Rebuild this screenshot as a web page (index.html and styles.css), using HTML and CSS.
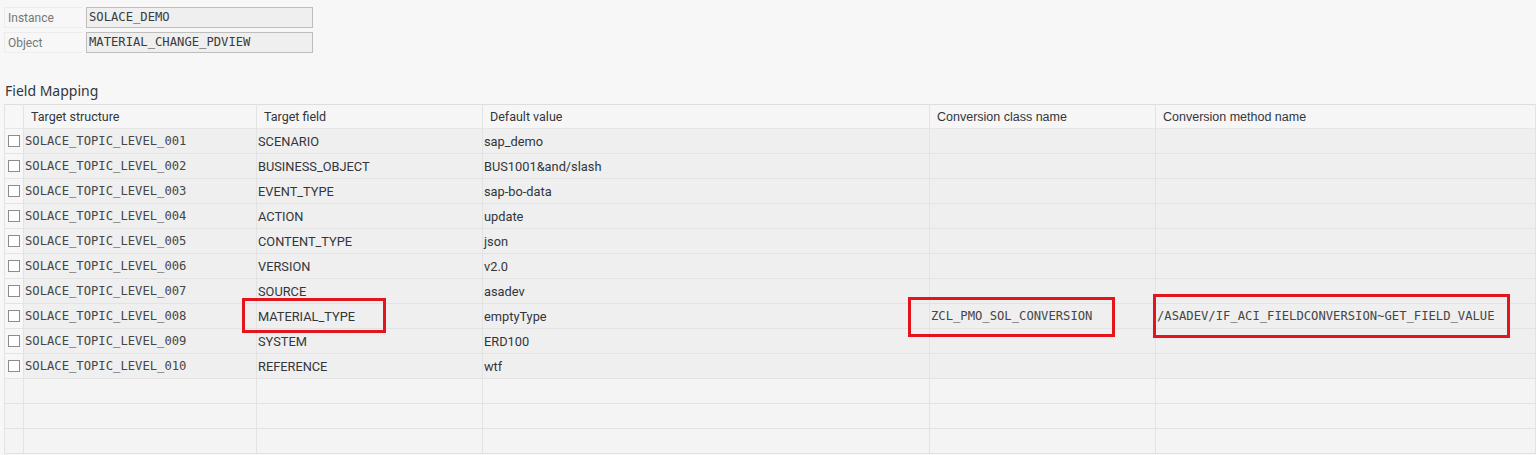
FILE: index.html
```html
<!DOCTYPE html>
<html>

<head>
    <meta charset="UTF-8">
    <title>Field Mapping</title>
    <link rel="stylesheet" href="styles.css">
</head>

<body>
    <div class="page">
        <!-- 头部的两个只读字段 -->
        <div class="header_fields">
            <div class="field">
                <div class="label">Instance</div>
                <div class="value">SOLACE_DEMO</div>
            </div>
            <div class="field">
                <div class="label">Object</div>
                <div class="value">MATERIAL_CHANGE_PDVIEW</div>
            </div>
        </div>

        <div class="title">Field Mapping</div>

        <table class="grid">
            <colgroup>
                <col class="c_sel">
                <col class="c_struct">
                <col class="c_field">
                <col class="c_default">
                <col class="c_class">
                <col class="c_method">
            </colgroup>
            <thead>
                <tr>
                    <th class="sel"></th>
                    <th>Target structure</th>
                    <th>Target field</th>
                    <th class="split">Default value</th>
                    <th class="narrow">Conversion class name</th>
                    <th class="narrow">Conversion method name</th>
                </tr>
            </thead>
            <tbody>
                <tr>
                    <td class="sel"><span class="box"></span></td>
                    <td class="mono">SOLACE_TOPIC_LEVEL_001</td>
                    <td>SCENARIO</td>
                    <td class="split">sap_demo</td>
                    <td></td>
                    <td></td>
                </tr>
                <tr>
                    <td class="sel"><span class="box"></span></td>
                    <td class="mono">SOLACE_TOPIC_LEVEL_002</td>
                    <td>BUSINESS_OBJECT</td>
                    <td class="split">BUS1001&amp;and/slash</td>
                    <td></td>
                    <td></td>
                </tr>
                <tr>
                    <td class="sel"><span class="box"></span></td>
                    <td class="mono">SOLACE_TOPIC_LEVEL_003</td>
                    <td>EVENT_TYPE</td>
                    <td class="split">sap-bo-data</td>
                    <td></td>
                    <td></td>
                </tr>
                <tr>
                    <td class="sel"><span class="box"></span></td>
                    <td class="mono">SOLACE_TOPIC_LEVEL_004</td>
                    <td>ACTION</td>
                    <td class="split">update</td>
                    <td></td>
                    <td></td>
                </tr>
                <tr>
                    <td class="sel"><span class="box"></span></td>
                    <td class="mono">SOLACE_TOPIC_LEVEL_005</td>
                    <td>CONTENT_TYPE</td>
                    <td class="split">json</td>
                    <td></td>
                    <td></td>
                </tr>
                <tr>
                    <td class="sel"><span class="box"></span></td>
                    <td class="mono">SOLACE_TOPIC_LEVEL_006</td>
                    <td>VERSION</td>
                    <td class="split">v2.0</td>
                    <td></td>
                    <td></td>
                </tr>
                <tr>
                    <td class="sel"><span class="box"></span></td>
                    <td class="mono">SOLACE_TOPIC_LEVEL_007</td>
                    <td>SOURCE</td>
                    <td class="split">asadev</td>
                    <td></td>
                    <td></td>
                </tr>
                <tr>
                    <td class="sel"><span class="box"></span></td>
                    <td class="mono">SOLACE_TOPIC_LEVEL_008</td>
                    <td class="mark">MATERIAL_TYPE<span class="hl hl_field"></span></td>
                    <td class="split">emptyType</td>
                    <td class="mono mark">ZCL_PMO_SOL_CONVERSION<span class="hl hl_class"></span></td>
                    <td class="mono mark">/ASADEV/IF_ACI_FIELDCONVERSION~GET_FIELD_VALUE<span class="hl hl_method"></span></td>
                </tr>
                <tr>
                    <td class="sel"><span class="box"></span></td>
                    <td class="mono">SOLACE_TOPIC_LEVEL_009</td>
                    <td>SYSTEM</td>
                    <td class="split">ERD100</td>
                    <td></td>
                    <td></td>
                </tr>
                <tr>
                    <td class="sel"><span class="box"></span></td>
                    <td class="mono">SOLACE_TOPIC_LEVEL_010</td>
                    <td>REFERENCE</td>
                    <td class="split">wtf</td>
                    <td></td>
                    <td></td>
                </tr>
                <tr class="empty">
                    <td class="sel"></td><td></td><td></td><td class="split"></td><td></td><td></td>
                </tr>
                <tr class="empty">
                    <td class="sel"></td><td></td><td></td><td class="split"></td><td></td><td></td>
                </tr>
                <tr class="empty">
                    <td class="sel"></td><td></td><td></td><td class="split"></td><td></td><td></td>
                </tr>
            </tbody>
        </table>
    </div>
</body>

</html>
```

FILE: styles.css
```css
* {
    margin: 0;
    padding: 0;
    box-sizing: border-box;
}
:root {
    --text: #32363a;
    --label: #6a6d70;
    --line: #e3e3e3;
    --red: #e3141c;
}
body {
    background-color: #f7f7f7;
    font-family: Roboto, "Liberation Sans", sans-serif;
    color: var(--text);
}
.page {
    padding: 7px 0 0 4px;
}
/* 顶部的 Instance / Object */
.header_fields {
    display: flex;
    flex-direction: column;
    gap: 4px;
}
.field {
    display: flex;
    gap: 4px;
    height: 21px;
}
.label {
    width: 78px;
    padding-left: 3px;
    line-height: 20px;
    font-size: 12px;
    color: #74777a;
    border: 1px solid #ececec;
    border-right: none;
}
.value {
    width: 227px;
    padding-left: 2px;
    line-height: 19px;
    font-family: "DejaVu Sans Mono", "Liberation Mono", monospace;
    font-size: 12.2px;
    color: #3b3b3b;
    background-color: #efefef;
    border: 1px solid #bdbdbd;
}
.title {
    margin-top: 29px;
    padding-left: 1px;
    height: 22px;
    font-family: "Noto Sans", "Liberation Sans", sans-serif;
    font-size: 14px;
    line-height: 18px;
    color: var(--text);
}
/* 表格 */
.grid {
    width: 1532px;
    table-layout: fixed;
    border-collapse: collapse;
    font-size: 12.8px;
}
.c_sel { width: 19px; }
.c_struct { width: 233px; }
.c_field { width: 226px; }
.c_default { width: 447px; }
.c_class { width: 226px; }
.grid th,
.grid td {
    height: 25px;
    border: 1px solid var(--line);
    border-top: none;
    white-space: nowrap;
    overflow: visible;
    text-align: left;
    vertical-align: middle;
}
.grid th {
    height: 24px;
    padding-left: 7px;
    font-size: 12.5px;
    font-weight: normal;
    background-color: #f6f6f6;
    border-top: 1px solid #dedede;
    border-bottom: 1px solid #e6e6e6;
}
.grid th.narrow {
    font-family: "Liberation Sans", sans-serif;
}
.grid td {
    padding-left: 1px;
    background-color: #efefef;
}
.grid tr.empty td {
    background-color: #f4f4f4;
}
.grid td.sel,
.grid th.sel {
    padding: 0;
    background-color: #f7f7f7;
}
.grid .split {
    border-left: 1px solid #8a8a8a;
}
.mono {
    font-family: "DejaVu Sans Mono", "Liberation Mono", monospace;
    font-size: 12.2px;
    color: #464646;
}
/* 复选框 */
.box {
    display: block;
    width: 12px;
    height: 12px;
    margin-left: 3px;
    background-color: #fff;
    border: 1px solid #8c8c8c;
}
/* 红色标记框 */
.mark {
    position: relative;
}
.hl {
    position: absolute;
    border: 3px solid var(--red);
}
.hl_field {
    left: -15px;
    top: -6px;
    width: 144px;
    height: 35px;
}
.hl_class {
    left: -22px;
    top: -7px;
    width: 207px;
    height: 40px;
}
.hl_method {
    left: -3px;
    top: -10px;
    width: 357px;
    height: 44px;
}
```
